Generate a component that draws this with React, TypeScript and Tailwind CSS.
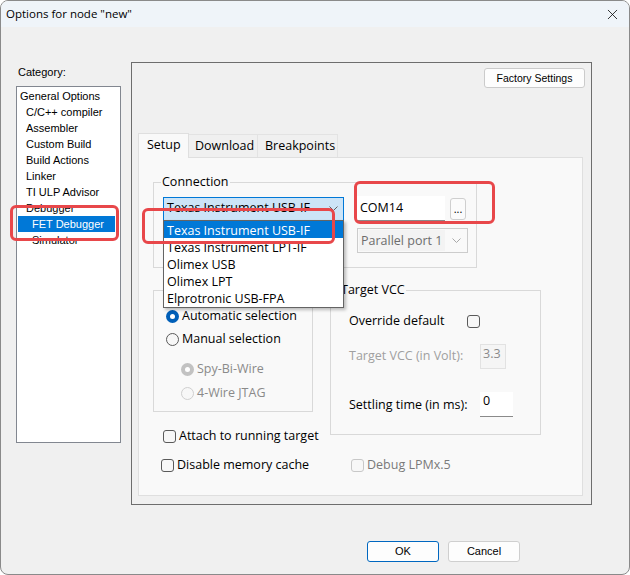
import { X } from 'lucide-react';

const ui = { fontFamily: '"Open Sans", "Noto Sans", sans-serif' };
const classic = { fontFamily: '"Liberation Sans", Arial, sans-serif' };

const Chevron = ({ color = '#606060' }: { color?: string }) => (
  <svg width="9" height="6" viewBox="0 0 9 6">
    <polyline points="0.5,0.5 4.5,4.5 8.5,0.5" fill="none" stroke={color} strokeWidth="1" />
  </svg>
);

const Checkbox = ({ disabled = false }: { disabled?: boolean }) => (
  <span
    className={`inline-block shrink-0 w-[13px] h-[13px] rounded-[3px] border bg-[#f7f7f7] ${
      disabled ? 'border-[#c8c8c8]' : 'border-[#5a5a5a]'
    }`}
  />
);

const Radio = ({ checked = false, disabled = false }: { checked?: boolean; disabled?: boolean }) => {
  if (checked) {
    return (
      <span
        className={`flex shrink-0 items-center justify-center w-[13px] h-[13px] rounded-full ${
          disabled ? 'bg-[#c2c2c2]' : 'bg-[#005fb8]'
        }`}
      >
        <span className="w-[5px] h-[5px] rounded-full bg-white" />
      </span>
    );
  }
  return (
    <span
      className={`inline-block shrink-0 w-[13px] h-[13px] rounded-full border bg-[#f7f7f7] ${
        disabled ? 'border-[#cfcfcf]' : 'border-[#5a5a5a]'
      }`}
    />
  );
};

const categories = [
  { label: 'General Options', indent: 'pl-[2px]' },
  { label: 'C/C++ compiler', indent: 'pl-[8px]' },
  { label: 'Assembler', indent: 'pl-[8px]' },
  { label: 'Custom Build', indent: 'pl-[8px]' },
  { label: 'Build Actions', indent: 'pl-[8px]' },
  { label: 'Linker', indent: 'pl-[8px]' },
  { label: 'TI ULP Advisor', indent: 'pl-[8px]' },
  { label: 'Debugger', indent: 'pl-[8px]' },
  { label: 'FET Debugger', indent: 'pl-[14px]', selected: true },
  { label: 'Simulator', indent: 'pl-[14px]' },
];

const drivers = [
  'Texas Instrument USB-IF',
  'Texas Instrument LPT-IF',
  'Olimex USB',
  'Olimex LPT',
  'Elprotronic USB-FPA',
];

export default function App() {
  return (
    <div
      style={ui}
      className="relative w-[630px] h-[575px] flex flex-col bg-[#f0f0f0] border border-[#8a8a8a] rounded-[8px] overflow-hidden text-[12.5px] text-black"
    >
      {/* Title bar */}
      <div className="h-[26px] shrink-0 flex items-center justify-between pl-[5px] pr-[8px] bg-[#eff4f9]">
        <span className="text-[11.5px]">Options for node &quot;new&quot;</span>
        <X size={17} strokeWidth={1.1} />
      </div>

      {/* Body */}
      <div className="flex pl-[15px] pt-[35px]">
        {/* Category */}
        <div style={classic} className="flex flex-col pt-[2px]">
          <div className="h-[16px] leading-[16px] pl-[2px] text-[11px]">Category:</div>
          <div className="mt-[6px] w-[105px] h-[357px] bg-white border border-[#828790] pt-[1px] pl-[1px]">
            {categories.map((c) => (
              <div
                key={c.label}
                className={`h-[16px] leading-[16px] text-[11px] whitespace-nowrap mr-[5px] ${c.indent} ${
                  c.selected ? 'bg-[#0078d7] text-white' : ''
                }`}
              >
                {c.label}
              </div>
            ))}
          </div>
        </div>

        {/* Main panel */}
        <div className="ml-[10px] w-[461px] h-[443px] border border-[#6d6d6d] flex flex-col">
          <div className="flex justify-end pr-[6px] pt-[5px]">
            <button
              style={classic}
              className="w-[101px] h-[20px] rounded-[3px] border border-[#cbcbcb] bg-[#fdfdfd] text-[10.5px] leading-[18px]"
            >
              Factory Settings
            </button>
          </div>

          {/* Tabs */}
          <div className="relative z-10 mt-[45px] ml-[6px] flex items-start h-[24px]">
            <div className="h-[25px] w-[51px] pl-[8px] pt-[2px] bg-[#f9f9f9] border border-b-0 border-[#dfdfdf]">Setup</div>
            <div className="mt-[1px] h-[23px] w-[69px] pl-[6px] pt-[2px] border border-b-0 border-l-0 border-[#e3e3e3]">Download</div>
            <div className="mt-[1px] h-[23px] w-[80px] pl-[7px] pt-[2px] border border-b-0 border-l-0 border-[#e3e3e3]">Breakpoints</div>
          </div>

          {/* Tab panel */}
          <div className="ml-[6px] w-[445px] h-[339px] bg-[#f9f9f9] border border-[#dfdfdf] pl-[14px]">
            {/* Connection */}
            <div className="relative mt-[24px] w-[324px] h-[86px] border border-[#d9d9d9]">
              <span className="absolute -top-[10px] left-[7px] px-[1px] bg-[#f9f9f9] leading-[18px]">Connection</span>
              <div className="flex items-center pt-[13px] pl-[9px]">
                <div className="relative w-[181px] h-[24px] bg-[#cce4f7] border border-[#0078d7] flex items-center justify-between pl-[3px] pr-[5px]">
                  <span className="whitespace-nowrap">Texas Instrument USB-IF</span>
                  <Chevron />
                  {/* Open drop-down list */}
                  <div className="absolute left-[-1px] top-[22px] z-20 w-[181px] h-[88px] bg-white border border-[#646464] shadow-[2px_2px_3px_rgba(0,0,0,0.25)]">
                    {drivers.map((d, i) => (
                      <div
                        key={d}
                        className={`h-[17px] leading-[17px] pt-[1px] pl-[3px] whitespace-nowrap ${
                          i === 0 ? 'bg-[#0078d7] text-white' : ''
                        }`}
                      >
                        {d}
                      </div>
                    ))}
                  </div>
                </div>
                <div className="ml-[13px] w-[88px] h-[25px] bg-white border-b border-[#8a8a8a] pl-[3px] leading-[24px]">COM14</div>
                <button className="ml-[5px] w-[16px] h-[22px] rounded-[3px] border border-[#cfcfcf] bg-[#fbfbfb] text-[11px] leading-[18px]">...</button>
              </div>
              <div className="ml-[203px] mt-[7px] w-[111px] h-[25px] border border-[#cccccc] flex items-center justify-between pl-[1px] pr-[6px]">
                <span className="h-[21px] leading-[21px] pl-[2px] pr-[3px] bg-[#f3f3f3] text-[#6d6d6d] whitespace-nowrap">Parallel port 1</span>
                <Chevron color="#a8a8a8" />
              </div>
            </div>

            {/* JTAG + Target VCC */}
            <div className="flex mt-[22px] gap-[17px]">
              <div className="w-[160px] shrink-0 flex flex-col">
                <div className="w-[160px] h-[122px] border border-[#d9d9d9] pl-[12px] pt-[14px]">
                  <div className="h-[23px] flex items-center gap-[3px]">
                    <Radio checked />
                    <span>Automatic selection</span>
                  </div>
                  <div className="h-[23px] flex items-center gap-[3px]">
                    <Radio />
                    <span>Manual selection</span>
                  </div>
                  <div className="mt-[6px] pl-[15px] h-[24px] flex items-center gap-[3px] text-[#8a8a8a]">
                    <Radio checked disabled />
                    <span>Spy-Bi-Wire</span>
                  </div>
                  <div className="pl-[15px] h-[24px] flex items-center gap-[3px] text-[#8a8a8a]">
                    <Radio disabled />
                    <span>4-Wire JTAG</span>
                  </div>
                </div>
                <div className="mt-[14px] ml-[10px] h-[20px] flex items-center gap-[3px] whitespace-nowrap">
                  <Checkbox />
                  <span>Attach to running target</span>
                </div>
              </div>

              <div className="relative w-[211px] h-[145px] border border-[#d9d9d9] pl-[18px] pt-[20px]">
                <span className="absolute -top-[10px] left-[9px] px-[1px] bg-[#f9f9f9] leading-[18px]">Target VCC</span>
                <div className="h-[20px] flex items-center">
                  <span className="w-[118px]">Override default</span>
                  <Checkbox />
                </div>
                <div className="mt-[13px] h-[25px] flex items-center">
                  <span className="w-[131px] text-[#a0a0a0]">Target VCC (in Volt):</span>
                  <span className="w-[26px] h-[25px] border border-[#e2e2e2] bg-[#f5f5f5] text-[#8a8a8a] pl-[2px] leading-[18px]">3.3</span>
                </div>
                <div className="mt-[23px] h-[25px] flex items-center">
                  <span className="w-[131px] pt-[2px]">Settling time (in ms):</span>
                  <span className="w-[33px] h-[25px] bg-white border-b border-[#8a8a8a] pl-[3px] leading-[18px]">0</span>
                </div>
              </div>
            </div>

            <div className="mt-[9px] h-[20px] flex items-center">
              <div className="ml-[8px] w-[190px] flex items-center gap-[3px]">
                <Checkbox />
                <span>Disable memory cache</span>
              </div>
              <div className="flex items-center gap-[3px] text-[#7a7a7a]">
                <Checkbox disabled />
                <span>Debug LPMx.5</span>
              </div>
            </div>
          </div>
        </div>
      </div>

      {/* OK / Cancel */}
      <div className="flex justify-end gap-[9px] pr-[109px] mt-[36px]">
        <button
          style={classic}
          className="w-[72px] h-[21px] rounded-[3px] border border-[#0067c0] bg-[#fdfdfd] text-[11px] leading-[19px]"
        >
          OK
        </button>
        <button
          style={classic}
          className="w-[72px] h-[21px] rounded-[3px] border border-[#cfcfcf] bg-[#fdfdfd] text-[11px] leading-[19px]"
        >
          Cancel
        </button>
      </div>

      {/* Red annotation boxes */}
      <div className="absolute left-[9px] top-[204px] w-[109px] h-[36px] rounded-[6px] border-[3px] border-[#e8474a] z-30" />
      <div className="absolute left-[141px] top-[207px] w-[193px] h-[36px] rounded-[6px] border-[3px] border-[#e8474a] z-30" />
      <div className="absolute left-[353px] top-[180px] w-[141px] h-[43px] rounded-[6px] border-[3px] border-[#e8474a] z-30" />
    </div>
  );
}
